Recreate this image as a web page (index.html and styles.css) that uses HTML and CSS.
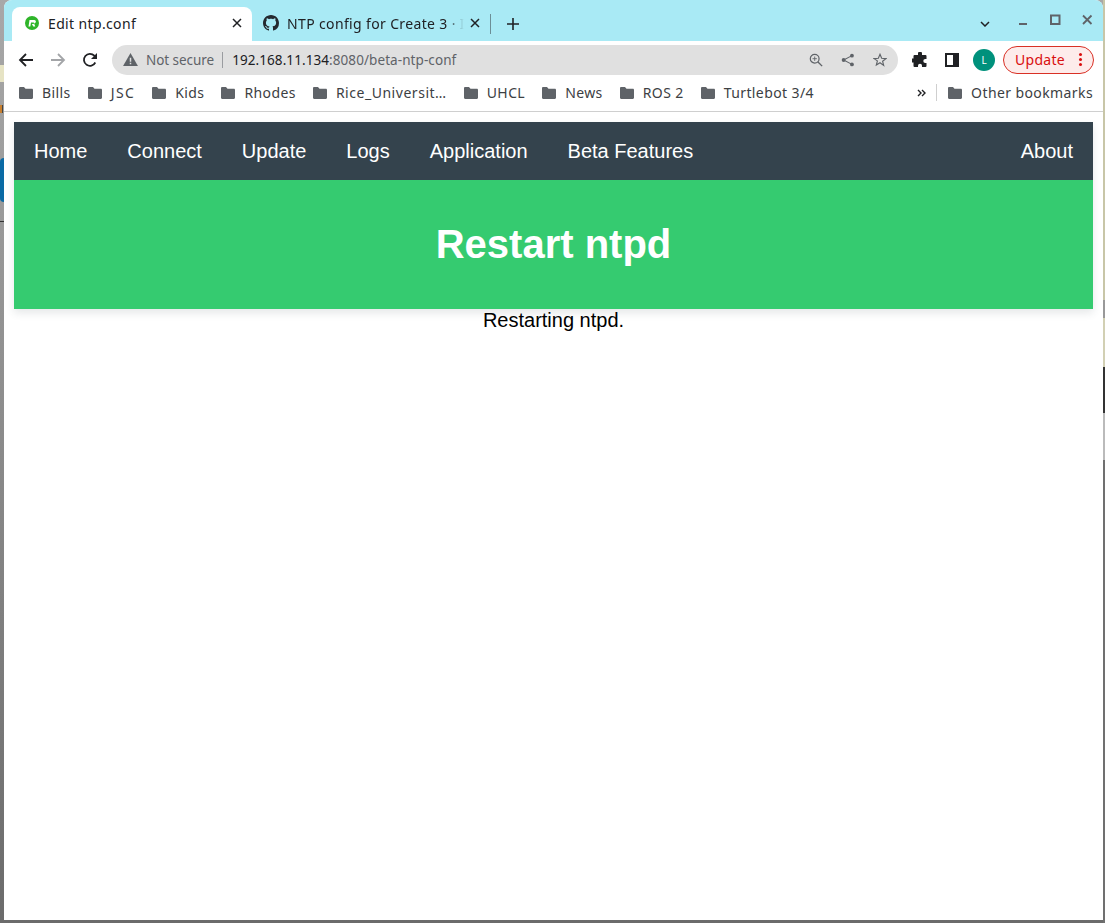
FILE: index.html
```html
<!DOCTYPE html>
<html lang="en">
<head>
<meta charset="utf-8">
<title>Edit ntp.conf</title>
<link rel="stylesheet" href="styles.css">
</head>
<body>
<div class="desk-note"></div>
<div class="desk-orange"></div>
<div class="desk-blue"></div>
<div class="desk-line"></div>
<div class="desk-right"></div>
<div class="window">
  <header class="tabstrip">
    <div class="tab tab-active">
      <svg class="favicon" viewBox="0 0 14 14"><circle cx="7" cy="7" r="7" fill="#2fb52a"/><path d="M3.500 10.500 4.500 4h4.700c1.400 0 1.900 1 1.600 2-.2.800-.9 1.300-1.700 1.400L10.300 10.500H8.300L6.800 7.900h1.400c.6 0 .9-.3 1-.7 .1-.4-.1-.7-.7-.7H6L5.300 10.500z" fill="#fff"/></svg>
      <span class="tab-title">Edit ntp.conf</span>
      <svg class="tab-close" viewBox="0 0 10 10"><path d="M1 1l8 8M9 1l-8 8" stroke="#202124" stroke-width="1.500"/></svg>
    </div>
    <div class="tab tab-other">
      <svg class="favicon-gh" viewBox="0 0 16 16"><path fill="#24292f" d="M8 0C3.580 0 0 3.580 0 8c0 3.540 2.290 6.530 5.470 7.590.4.070.55-.17.55-.38 0-.19-.01-.82-.01-1.490-2.010.37-2.530-.49-2.690-.94-.09-.23-.48-.94-.82-1.130-.28-.15-.68-.52-.01-.53.63-.01 1.080.58 1.230.82.720 1.210 1.870.87 2.330.66.070-.52.280-.87.510-1.070-1.780-.2-3.640-.89-3.640-3.950 0-.87.310-1.590.820-2.150-.08-.2-.36-1.020.08-2.120 0 0 .67-.21 2.200.82.640-.18 1.320-.27 2-.27s1.360.09 2 .27c1.530-1.040 2.200-.82 2.200-.82.440 1.100.16 1.920.08 2.120.51.560.82 1.270.82 2.150 0 3.070-1.870 3.750-3.650 3.950.29.250.54.730.54 1.480 0 1.070-.01 1.930-.01 2.200 0 .21.150.46.550.38A8.010 8.010 0 0 0 16 8c0-4.420-3.580-8-8-8z"/></svg>
      <span class="tab-title tab-fade">NTP config for Create 3 · Is</span>
      <svg class="tab-close" viewBox="0 0 10 10"><path d="M1 1l8 8M9 1l-8 8" stroke="#202124" stroke-width="1.500"/></svg>
    </div>
    <span class="tab-sep"></span>
    <svg class="new-tab" viewBox="0 0 12 12"><path d="M6 0v12M0 6h12" stroke="#202124" stroke-width="1.600"/></svg>
    <span class="strip-spacer"></span>
    <svg class="tab-search" viewBox="0 0 10 6"><path d="M1 1l4 4 4-4" fill="none" stroke="#202124" stroke-width="1.500"/></svg>
    <div class="win-controls">
      <svg class="win-btn" viewBox="0 0 12 12"><path d="M2 10h8" stroke="#5f6368" stroke-width="2"/></svg>
      <svg class="win-btn" viewBox="0 0 12 12"><path d="M2 1.500h8.500V10H2z" fill="none" stroke="#5f6368" stroke-width="2"/></svg>
      <svg class="win-btn" viewBox="0 0 12 12"><path d="M2 1.500l8.500 8.500M10.500 1.500L2 10" stroke="#5f6368" stroke-width="1.800"/></svg>
    </div>
  </header>

  <div class="toolbar">
    <svg class="nav-icon" viewBox="0 0 16 16"><path d="M15 8H2M8 2 2 8l6 6" fill="none" stroke="#202124" stroke-width="1.800"/></svg>
    <svg class="nav-icon" viewBox="0 0 16 16"><path d="M1 8h13M8 2l6 6-6 6" fill="none" stroke="#a3a5a8" stroke-width="1.800"/></svg>
    <svg class="nav-icon" viewBox="0 0 16 16"><path d="M13.300 10.500A6 6 0 1 1 12.300 3.700L14.500 5.800" fill="none" stroke="#202124" stroke-width="1.800"/><path d="M15 1v6H9z" fill="#202124"/></svg>
    <div class="omnibox">
      <svg class="warn" viewBox="0 0 16 14"><path d="M8 0l8 14H0z" fill="#5f6368"/><path d="M7.200 5h1.600v4.500H7.200zM7.200 10.500h1.600V12H7.200z" fill="#e0e0e0"/></svg>
      <span class="not-secure">Not secure</span>
      <span class="omni-sep"></span>
      <span class="url"><span class="url-host">192.168.11.134</span>:8080/beta-ntp-conf</span>
      <span class="strip-spacer"></span>
      <svg class="omni-icon" viewBox="0 0 16 16"><circle cx="6.500" cy="6.500" r="5" fill="none" stroke="#5f6368" stroke-width="1.400"/><path d="M10 10l5 5" stroke="#5f6368" stroke-width="1.600"/><path d="M4 6.500h5M6.500 4v5" stroke="#5f6368"/></svg>
      <svg class="omni-icon" viewBox="0 0 16 16"><circle cx="12.500" cy="3" r="2.200" fill="#5f6368"/><circle cx="3" cy="8" r="2.200" fill="#5f6368"/><circle cx="12.500" cy="13" r="2.200" fill="#5f6368"/><path d="M12.500 3 3 8l9.500 5" fill="none" stroke="#5f6368" stroke-width="1.200"/></svg>
      <svg class="omni-icon" viewBox="0 0 16 16"><path d="M8 1.500l1.900 4.500 4.800.4-3.700 3.100 1.200 4.700L8 11.200l-4.200 2.500L5 9 1.300 6.400l4.800-.4z" fill="none" stroke="#5f6368" stroke-width="1.300"/></svg>
    </div>
    <svg class="ext-icon" viewBox="0 0 16 16"><path fill="#202124" d="M6 1.500a2 2 0 0 1 4 0V3h3.500a1 1 0 0 1 1 1v3h-1.200a2 2 0 0 0 0 4h1.200v3a1 1 0 0 1-1 1H10v-1.200a2 2 0 0 0-4 0V15H2.500a1 1 0 0 1-1-1v-3.500H.8a2 2 0 0 1 0-4h.7V4a1 1 0 0 1 1-1H6z"/></svg>
    <span class="side-panel"></span>
    <span class="avatar">L</span>
    <div class="update-btn"><span>Update</span><span class="dots"><i></i><i></i><i></i></span></div>
  </div>

  <nav class="bookmarks">
    <div class="bm"><svg class="folder" viewBox="0 0 14 12"><path d="M0 1.200C0 .5.500 0 1.200 0H5l1.500 1.800h6.300c.7 0 1.200.5 1.200 1.200v7.800c0 .7-.5 1.200-1.200 1.200H1.200C.5 12 0 11.500 0 10.800z" fill="#5f6368"/></svg>Bills</div>
    <div class="bm bm-caps"><svg class="folder" viewBox="0 0 14 12"><path d="M0 1.200C0 .5.500 0 1.200 0H5l1.500 1.800h6.300c.7 0 1.200.5 1.200 1.200v7.800c0 .7-.5 1.200-1.200 1.200H1.200C.5 12 0 11.500 0 10.800z" fill="#5f6368"/></svg>JSC</div>
    <div class="bm"><svg class="folder" viewBox="0 0 14 12"><path d="M0 1.200C0 .5.500 0 1.200 0H5l1.500 1.800h6.300c.7 0 1.200.5 1.200 1.200v7.800c0 .7-.5 1.200-1.200 1.200H1.200C.5 12 0 11.500 0 10.800z" fill="#5f6368"/></svg>Kids</div>
    <div class="bm"><svg class="folder" viewBox="0 0 14 12"><path d="M0 1.200C0 .5.500 0 1.200 0H5l1.500 1.800h6.300c.7 0 1.200.5 1.200 1.200v7.800c0 .7-.5 1.200-1.200 1.200H1.200C.5 12 0 11.500 0 10.800z" fill="#5f6368"/></svg>Rhodes</div>
    <div class="bm bm-long"><svg class="folder" viewBox="0 0 14 12"><path d="M0 1.200C0 .5.500 0 1.200 0H5l1.500 1.800h6.300c.7 0 1.200.5 1.200 1.200v7.800c0 .7-.5 1.200-1.200 1.200H1.200C.5 12 0 11.500 0 10.800z" fill="#5f6368"/></svg>Rice_Universit…</div>
    <div class="bm"><svg class="folder" viewBox="0 0 14 12"><path d="M0 1.200C0 .5.500 0 1.200 0H5l1.500 1.800h6.300c.7 0 1.200.5 1.200 1.200v7.800c0 .7-.5 1.200-1.200 1.200H1.200C.5 12 0 11.500 0 10.800z" fill="#5f6368"/></svg>UHCL</div>
    <div class="bm"><svg class="folder" viewBox="0 0 14 12"><path d="M0 1.200C0 .5.500 0 1.200 0H5l1.500 1.800h6.300c.7 0 1.200.5 1.200 1.200v7.800c0 .7-.5 1.200-1.200 1.200H1.200C.5 12 0 11.500 0 10.800z" fill="#5f6368"/></svg>News</div>
    <div class="bm"><svg class="folder" viewBox="0 0 14 12"><path d="M0 1.200C0 .5.500 0 1.200 0H5l1.500 1.800h6.300c.7 0 1.200.5 1.200 1.200v7.800c0 .7-.5 1.200-1.200 1.200H1.200C.5 12 0 11.500 0 10.800z" fill="#5f6368"/></svg>ROS 2</div>
    <div class="bm"><svg class="folder" viewBox="0 0 14 12"><path d="M0 1.200C0 .5.500 0 1.200 0H5l1.500 1.800h6.300c.7 0 1.200.5 1.200 1.200v7.800c0 .7-.5 1.200-1.200 1.200H1.200C.5 12 0 11.500 0 10.800z" fill="#5f6368"/></svg>Turtlebot 3/4</div>
    <span class="strip-spacer"></span>
    <svg class="chev" viewBox="0 0 9 8"><path d="M1 1l3 3-3 3M5 1l3 3-3 3" fill="none" stroke="#202124" stroke-width="1.400"/></svg>
    <span class="bm-sep"></span>
    <div class="bm bm-last"><svg class="folder" viewBox="0 0 14 12"><path d="M0 1.200C0 .5.500 0 1.200 0H5l1.500 1.800h6.300c.7 0 1.200.5 1.200 1.200v7.800c0 .7-.5 1.200-1.200 1.200H1.200C.5 12 0 11.500 0 10.800z" fill="#5f6368"/></svg>Other bookmarks</div>
  </nav>

  <main class="content">
    <div class="card">
      <div class="topnav">
        <a class="nav-link">Home</a>
        <a class="nav-link">Connect</a>
        <a class="nav-link">Update</a>
        <a class="nav-link">Logs</a>
        <a class="nav-link">Application</a>
        <a class="nav-link">Beta Features</a>
        <span class="strip-spacer"></span>
        <a class="nav-link">About</a>
      </div>
      <div class="hero"><h1>Restart ntpd</h1></div>
    </div>
    <p class="message">Restarting ntpd.</p>
  </main>
</div>
</body>
</html>
```
FILE: styles.css
```css
* { box-sizing: border-box; }
html, body { margin: 0; height: 100%; }
body {
  width: 1105px;
  height: 923px;
  overflow: hidden;
  background: linear-gradient(#a8a8a8, #6b6b6b);
  padding: 0 2px 3px 4px;
  position: relative;
}
.desk-note { position: absolute; left: 0; top: 65px; width: 4px; height: 17px; background: #e6e3c4; }
.desk-orange { position: absolute; left: 0; top: 105px; width: 3px; height: 8px; background: #c9802f; border-right: 1px solid #444; }
.desk-blue {
  position: absolute;
  left: 0;
  top: 158px;
  width: 4px;
  height: 44px;
  background: #0a6aa5;
  border-radius: 4px 0 0 4px;
}
.desk-line { position: absolute; left: 0; top: 221px; width: 4px; height: 1px; background: #333; }
.desk-right {
  position: absolute;
  right: 0;
  top: 0;
  width: 2px;
  height: 923px;
  background: linear-gradient(#c8c6a8 0 300px, #999 300px 318px, #d2d0b4 318px 367px, #333 367px 413px, #bbb 413px 460px, #707070 460px);
}
.window {
  width: 1099px;
  height: 920px;
  background: #fff;
  display: flex;
  flex-direction: column;
  border-radius: 8px 8px 0 0;
  overflow: hidden;
  font-family: "Noto Sans", "Open Sans", sans-serif;
  color: #3c4043;
}
.strip-spacer { flex: 1; }

.tabstrip {
  height: 41px;
  flex: none;
  background: #a9eaf5;
  display: flex;
  align-items: flex-start;
  padding-left: 8px;
}
.tab {
  margin-top: 7px;
  height: 34px;
  display: flex;
  align-items: center;
  font-size: 14px;
  color: #202124;
}
.tab-active {
  width: 240px;
  background: #fff;
  border-radius: 8px 8px 0 0;
  padding: 0 10px 2px 13px;
}
.tab-other { width: 238px; padding: 0 10px 2px 11px; }
.favicon { width: 14px; height: 14px; margin-right: 9px; flex: none; }
.favicon-gh { width: 16px; height: 16px; margin-right: 8px; flex: none; }
.tab-title { flex: 1; white-space: nowrap; overflow: hidden; letter-spacing: 0.36px; }
.tab-fade {
  -webkit-mask-image: linear-gradient(90deg, #000 90%, transparent 100%);
  mask-image: linear-gradient(90deg, #000 90%, transparent 100%);
}
.tab-close { width: 10px; height: 10px; flex: none; margin-left: 6px; }
.tab-sep { width: 1px; height: 20px; margin-top: 14px; background: #6c8e96; }
.new-tab { width: 12px; height: 12px; margin: 18px 0 0 16px; }
.tab-search { width: 10px; height: 6px; margin-top: 21px; }
.win-controls { display: flex; gap: 20px; margin: 14px 10px 0 27px; }
.win-btn { width: 12px; height: 12px; }

.toolbar {
  height: 37px;
  flex: none;
  display: flex;
  align-items: center;
  padding-left: 14px;
}
.nav-icon { width: 16px; height: 16px; margin-right: 16px; flex: none; }
.nav-icon:nth-of-type(3) { margin-right: 14px; }
.omnibox {
  width: 786px;
  height: 30px;
  background: #e0e0e0;
  border-radius: 15px;
  display: flex;
  align-items: center;
  padding: 0 11px 0 11px;
  font-size: 13.500px;
}
.warn { width: 15px; height: 13px; margin-right: 8px; flex: none; }
.not-secure { color: #5f6368; letter-spacing: -0.05px; }
.omni-sep { width: 1px; height: 16px; background: #9a9ca0; margin: 0 9px 0 8px; }
.url { color: #5f6368; letter-spacing: 0.08px; white-space: nowrap; }
.url-host { color: #202124; }
.omni-icon { width: 14px; height: 14px; margin-left: 18px; flex: none; }
.ext-icon { width: 16px; height: 16px; margin-left: 14px; flex: none; }
.side-panel {
  width: 14px;
  height: 14px;
  margin-left: 17px;
  border: 2.500px solid #202124;
  border-right-width: 6px;
  flex: none;
}
.avatar {
  width: 22px;
  height: 22px;
  margin-left: 14px;
  border-radius: 50%;
  background: #00917c;
  color: #fff;
  font-size: 10px;
  display: flex;
  align-items: center;
  justify-content: center;
  flex: none;
}
.update-btn {
  width: 91px;
  height: 28px;
  margin-left: 8px;
  border: 1px solid #d93025;
  border-radius: 14px;
  background: #fdeceb;
  color: #d90f0f;
  font-size: 14px;
  letter-spacing: 0.3px;
  display: flex;
  align-items: center;
  justify-content: space-between;
  padding: 0 11px 0 11px;
  flex: none;
}
.dots { display: flex; flex-direction: column; gap: 2px; }
.dots i { display: block; width: 3px; height: 3px; border-radius: 50%; background: #d90f0f; }

.bookmarks {
  height: 34px;
  flex: none;
  border-bottom: 1px solid #cfcfcf;
  display: flex;
  align-items: center;
  padding: 0 10px 4px 15px;
  font-size: 14px;
  color: #3c4043;
}
.bm { display: flex; align-items: center; white-space: nowrap; margin-right: 17px; letter-spacing: 0.4px; }
.bm-caps { letter-spacing: 1.4px; }
.bm-long { letter-spacing: 0.53px; }
.bm-last { margin-right: 0; }
.folder { width: 14px; height: 12px; margin-right: 9px; flex: none; }
.chev { width: 9px; height: 8px; }
.bm-sep { width: 1px; height: 17px; background: #cfcfcf; margin: 0 11px 0 10px; }

.content { flex: 1; padding: 10px 10px 0 10px; font-family: "Liberation Sans", Arial, sans-serif; color: #000; }
.card { box-shadow: 0 4px 8px rgba(52, 66, 76, 0.12); }
.topnav { height: 58px; background: #34434d; display: flex; align-items: stretch; }
.nav-link { color: #fff; font-size: 20px; line-height: 58px; padding: 0 20px; }
.hero { height: 129px; background: #35cb70; display: flex; align-items: center; justify-content: center; padding-bottom: 2px; }
.hero h1 { margin: 0; color: #fff; font-size: 40px; font-weight: 700; line-height: 1.15; }
.message { margin: 0; font-size: 20px; line-height: 23px; text-align: center; }
```
